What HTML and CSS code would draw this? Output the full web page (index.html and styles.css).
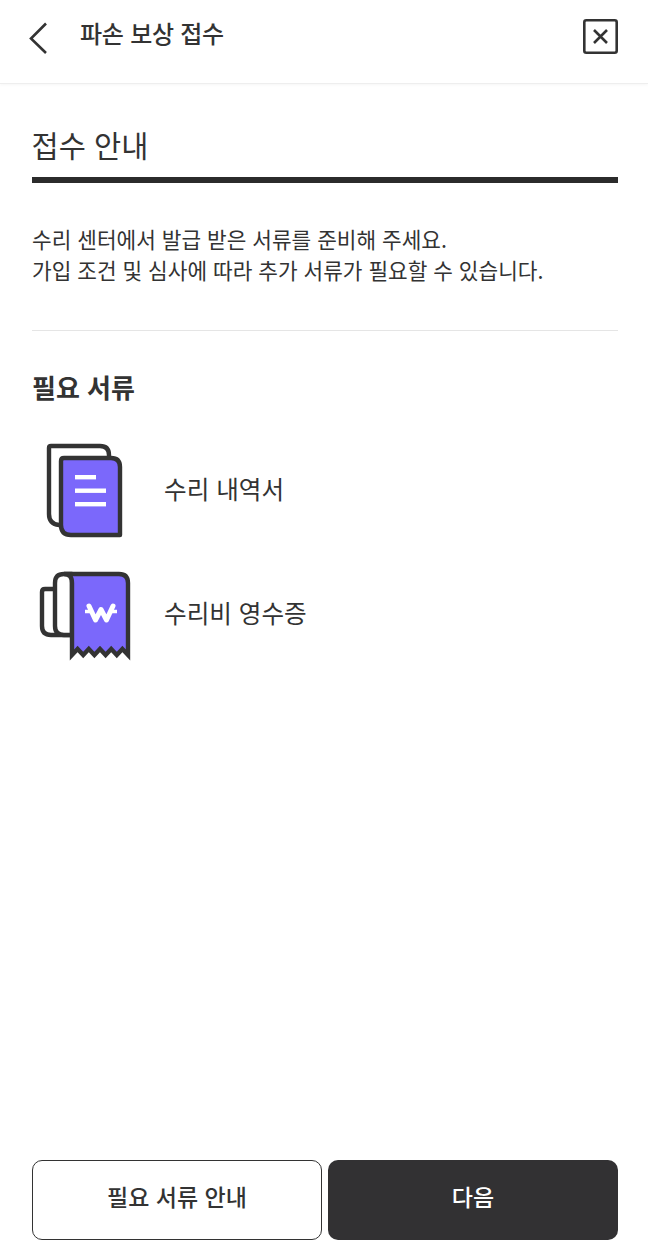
FILE: index.html
```html
<!DOCTYPE html>
<html lang="ko">
<head>
  <meta charset="UTF-8">
  <meta name="viewport" content="width=device-width, initial-scale=1.0">
  <title>파손 보상 접수</title>
  <link rel="stylesheet" href="styles.css">
</head>
<body>
  <header class="topbar">
    <svg class="back-icon" width="24" height="32" viewBox="0 0 24 32">
      <path d="M19 1.5 L4 16.5 L19 31" fill="none" stroke="#333" stroke-width="2.6"/>
    </svg>
    <h1 class="topbar-title">파손 보상 접수</h1>
    <svg class="close-icon" width="35" height="35" viewBox="0 0 35 35">
      <rect x="1.3" y="1.3" width="32.4" height="32.4" rx="2" fill="none" stroke="#333" stroke-width="2.6"/>
      <path d="M11 11 L24 24 M24 11 L11 24" fill="none" stroke="#333" stroke-width="2.6"/>
    </svg>
  </header>

  <main class="content">
    <h2 class="section-title">접수 안내</h2>
    <p class="guide">수리 센터에서 발급 받은 서류를 준비해 주세요.<br>가입 조건 및 심사에 따라 추가 서류가 필요할 수 있습니다.</p>

    <h3 class="docs-title">필요 서류</h3>
    <ul class="docs">
      <li class="doc">
        <svg class="doc-icon" width="100" height="100" viewBox="0 -1 100 100">
          <path d="M11 8 Q11 6 13 6 H62 Q71 6 71 15 V30 H30 V85 H21 Q11 84 11 74 Z" fill="#fff" stroke="#333" stroke-width="4.4" stroke-linejoin="round"/>
          <path d="M23 21 Q23 18 26 18 H73 Q82 18 82 27 V95 H33 Q23 95 23 85 Z" fill="#7b68fb" stroke="#333" stroke-width="4.4" stroke-linejoin="round"/>
          <rect x="37" y="35" width="21" height="4.4" fill="#fff"/>
          <rect x="37" y="48.5" width="31" height="4.4" fill="#fff"/>
          <rect x="37" y="62" width="31" height="4.4" fill="#fff"/>
        </svg>
        <span class="doc-name">수리 내역서</span>
      </li>
      <li class="doc">
        <svg class="doc-icon" width="100" height="100" viewBox="0 0 100 100">
          <path d="M34 26 H7 Q4 26 4 29 V63 Q4 72 13 72 H34" fill="#fff" stroke="#333" stroke-width="4.4"/>
          <path d="M34 72 H26 Q17 72 17 63 V20 Q17 11 26 11 H34 Z" fill="#fff" stroke="#333" stroke-width="4.4" stroke-linejoin="round"/>
          <path d="M26 11 H81 Q90 11 90 20 V92 L84.4 86 L78.8 92 L73.2 86 L67.6 92 L62 86 L56.4 92 L50.8 86 L45.2 92 L39.6 86 L34 92 V20 Q34 11 26 11 Z" fill="#7b68fb" stroke="#333" stroke-width="4.4"/>
          <path d="M51 43 L57.5 57 L63 46.5 L68.5 57 L75 43" fill="none" stroke="#fff" stroke-width="5" stroke-linejoin="round" stroke-linecap="round"/>
          <path d="M47 48.5 H53 M73 48.5 H79" fill="none" stroke="#fff" stroke-width="3.6"/>
        </svg>
        <span class="doc-name">수리비 영수증</span>
      </li>
    </ul>
  </main>

  <footer class="actions">
    <button class="btn btn-outline">필요 서류 안내</button>
    <button class="btn btn-dark">다음</button>
  </footer>
</body>
</html>
```

FILE: styles.css
```css
* {
  box-sizing: border-box;
}

body {
  margin: 0;
  display: flex;
  flex-direction: column;
  height: 1258px;
  background-color: #fff;
  color: #333;
  font-family: "Noto Sans CJK KR", "Noto Sans", sans-serif;
}

.topbar {
  display: flex;
  align-items: flex-start;
  height: 84px;
  padding: 19px 30px 0 27px;
  border-bottom: 1px solid #eee;
  box-shadow: 0 1px 3px rgba(0,0,0,0.04);
}

.back-icon {
  margin-top: 3px;
}

.topbar-title {
  flex: 1;
  margin: -2px 0 0 29px;
  font-size: 24px;
  font-weight: 500;
  line-height: 32px;
  letter-spacing: -0.25px;
}

.content {
  flex: 1;
  padding: 0 30px 0 32px;
}

.section-title {
  margin: 0 0 0 -0.5px;
  padding-top: 39px;
  height: 99px;
  border-bottom: 6px solid #2b2b2b;
  font-size: 29.5px;
  font-weight: 400;
  line-height: 42px;
}

.guide {
  margin: 0;
  padding: 40px 0 45px;
  border-bottom: 1px solid #e5e5e5;
  font-size: 21.35px;
  font-weight: 400;
  line-height: 31px;
}

.docs-title {
  margin: 38px 0 0;
  font-size: 26px;
  font-weight: 700;
  line-height: 36px;
}

.docs {
  margin: 22px 0 0;
  padding: 0;
  list-style: none;
}

.doc {
  display: flex;
  align-items: center;
  height: 124px;
}

.doc-icon {
  margin-left: 6px;
}

.doc-name {
  margin: 0 0 2px 26px;
  font-size: 24.6px;
  line-height: 32px;
}

.actions {
  display: grid;
  grid-template-columns: 1fr 1fr;
  gap: 6px;
  padding: 0 30px 18px 32px;
}

.btn {
  height: 80px;
  padding: 0 0 9px;
  border-radius: 10px;
  font-family: inherit;
  font-size: 23px;
  font-weight: 500;
}

.btn-outline {
  border: 1.5px solid #333;
  background-color: #fff;
  color: #333;
}

.btn-dark {
  border: none;
  background-color: #323133;
  color: #fff;
}
```
